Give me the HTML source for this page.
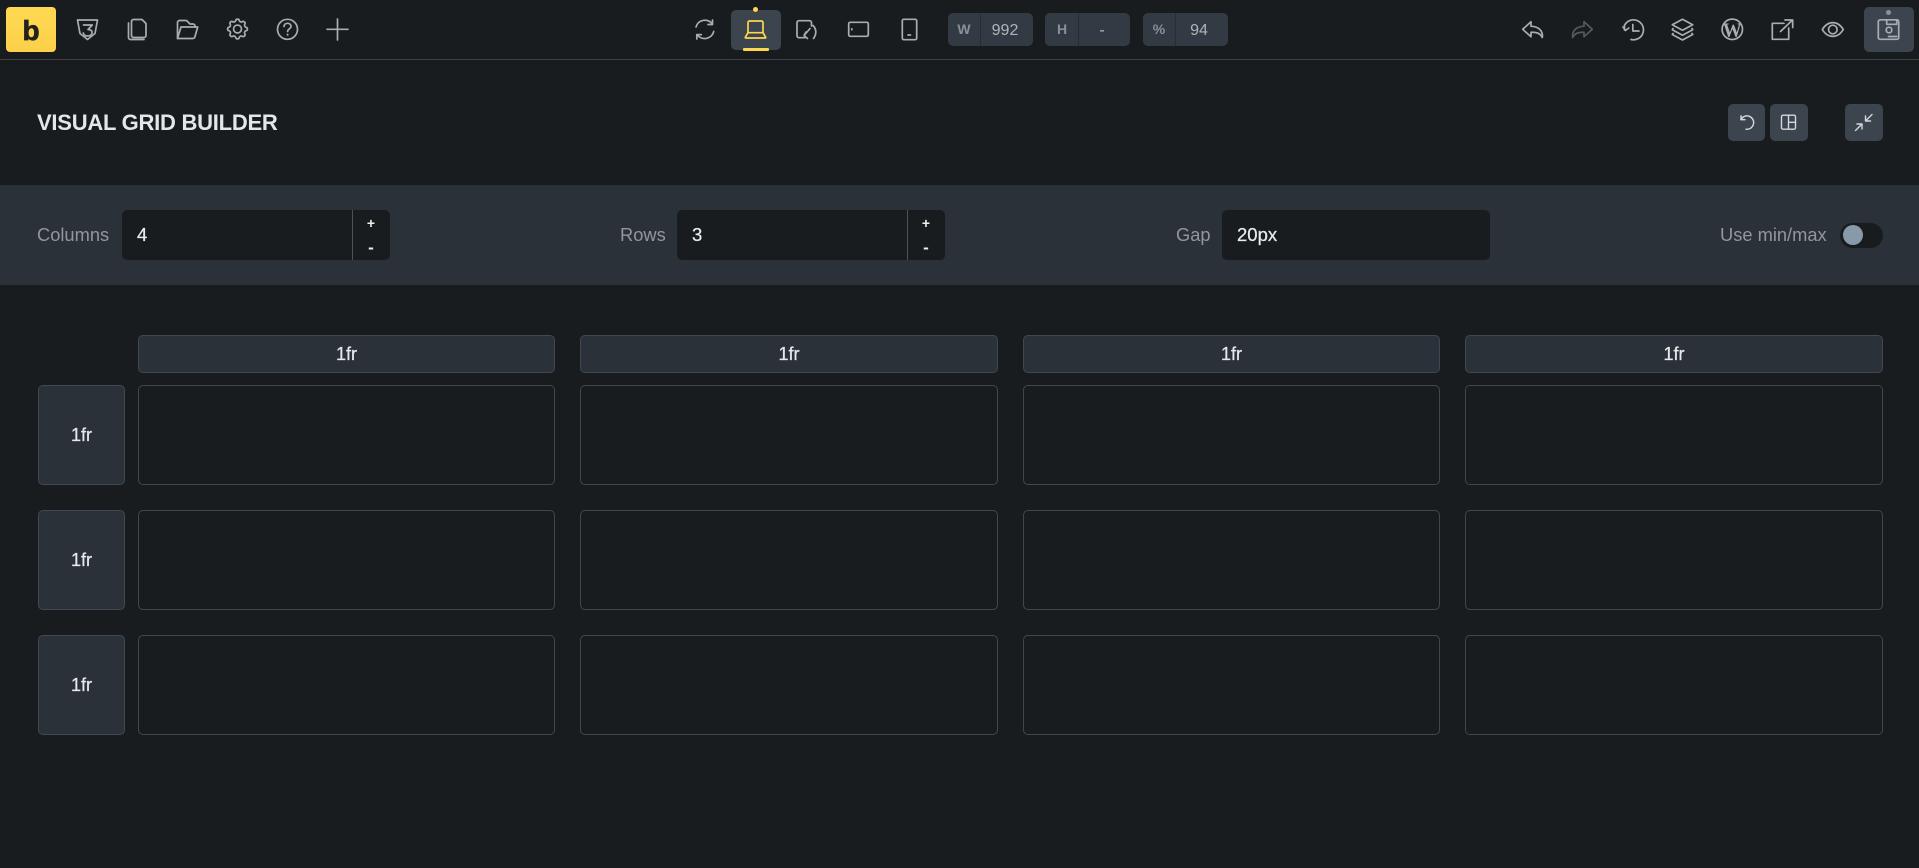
<!DOCTYPE html>
<html lang="en"><head><meta charset="utf-8"><title>Visual Grid Builder</title>
<style>
html,body{margin:0;padding:0;width:1919px;height:868px;overflow:hidden;background:#181c1f;font-family:"Liberation Sans",sans-serif}
.a{position:absolute;box-sizing:border-box}
.t{position:absolute;white-space:nowrap;line-height:1}
.c{transform:translateX(-50%)}
.cell{position:absolute;box-sizing:border-box;border:1px solid #43474b;border-radius:5px}
.hd{position:absolute;box-sizing:border-box;background:#2b3139;border:1px solid #3f4853;border-radius:5px;color:#e6e8ea;font-size:18px;-webkit-text-stroke:.25px #e6e8ea;display:flex;align-items:center;justify-content:center}
.rh{padding-top:1px}
.inp{position:absolute;box-sizing:border-box;background:#181c1f;border-radius:5px;top:210px;height:50px;width:268px}
.lab{font-size:18.3px;color:#92979c;top:226px}
.val{font-size:18.5px;color:#e8eaec;top:226px;-webkit-text-stroke:.25px #e8eaec}
.st{position:absolute;top:13px;height:33px;width:85px;background:#323a43;border-radius:5px}
.sd{position:absolute;top:13px;height:33px;width:1px;background:#272d34}
.sk{font-size:14px;font-weight:bold;color:#8a9099;top:22px}
.sv{font-size:16px;color:#b0b5ba;top:23px}
.btn{position:absolute;top:104px;height:37px;background:#3c444e;border-radius:5px}
svg{position:absolute;left:0;top:0;overflow:visible}
</style></head><body>

<div class="a" style="left:0;top:59px;width:1919px;height:1px;background:#3b3f46"></div>

<div class="a" style="left:6px;top:7px;width:50px;height:45px;border-radius:4px;background:linear-gradient(#ffd951,#fcd04a)"></div>
<div class="t c" style="left:31px;top:17px;font-size:28px;font-weight:bold;color:#22221f;-webkit-text-stroke:.7px #22221f">b</div>

<div class="a" style="left:731px;top:10px;width:50px;height:40px;background:#3c444e;border-radius:5px"></div>
<div class="a" style="left:743px;top:48px;width:26px;height:3px;background:#ffd64f;border-radius:1px"></div>
<div class="a" style="left:753px;top:7px;width:5px;height:5px;background:#ffd64f;border-radius:50%"></div>

<div class="st" style="left:948px"></div><div class="sd" style="left:980px"></div>
<div class="st" style="left:1045px"></div><div class="sd" style="left:1078px"></div>
<div class="st" style="left:1143px"></div><div class="sd" style="left:1175px"></div>
<div class="t c sk" style="left:964px">W</div><div class="t c sv" style="left:1005px">992</div>
<div class="t c sk" style="left:1062px">H</div><div class="t c sv" style="left:1102px">-</div>
<div class="t c sk" style="left:1159px">%</div><div class="t c sv" style="left:1199px">94</div>

<div class="a" style="left:1864px;top:7px;width:50px;height:45px;background:#3c444e;border-radius:5px"></div>
<div class="a" style="left:1886px;top:10px;width:5px;height:5px;background:#8b929b;border-radius:50%"></div>

<div class="t" style="left:37px;top:112px;font-size:22px;font-weight:bold;letter-spacing:-.25px;color:#e3e6ea">VISUAL GRID BUILDER</div>
<div class="btn" style="left:1728px;width:37px"></div>
<div class="btn" style="left:1770px;width:38px"></div>
<div class="btn" style="left:1845px;width:38px"></div>

<div class="a" style="left:0;top:185px;width:1919px;height:100px;background:#2b3139"></div>

<div class="t lab" style="left:37px">Columns</div>
<div class="inp" style="left:122px"></div>
<div class="a" style="left:352px;top:210px;width:1px;height:50px;background:#4a525c"></div>
<div class="t val" style="left:137px">4</div>
<div class="t c" style="left:371px;top:216px;font-size:14px;font-weight:bold;color:#eef0f2">+</div>
<div class="t c" style="left:371px;top:239px;font-size:17px;font-weight:bold;color:#eef0f2">-</div>

<div class="t lab" style="left:620px">Rows</div>
<div class="inp" style="left:677px"></div>
<div class="a" style="left:907px;top:210px;width:1px;height:50px;background:#4a525c"></div>
<div class="t val" style="left:692px">3</div>
<div class="t c" style="left:926px;top:216px;font-size:14px;font-weight:bold;color:#eef0f2">+</div>
<div class="t c" style="left:926px;top:239px;font-size:17px;font-weight:bold;color:#eef0f2">-</div>

<div class="t lab" style="left:1176px">Gap</div>
<div class="inp" style="left:1222px"></div>
<div class="t val" style="left:1237px">20px</div>

<div class="t lab" style="left:1720px">Use min/max</div>
<div class="a" style="left:1840px;top:223px;width:43px;height:25px;border-radius:13px;background:#181c1f"></div>
<div class="a" style="left:1843px;top:225px;width:20px;height:20px;border-radius:50%;background:#8899aa"></div>

<div class="hd" style="left:138px;top:335px;width:417px;height:38px">1fr</div>
<div class="hd" style="left:580px;top:335px;width:418px;height:38px">1fr</div>
<div class="hd" style="left:1023px;top:335px;width:417px;height:38px">1fr</div>
<div class="hd" style="left:1465px;top:335px;width:418px;height:38px">1fr</div>

<div class="hd rh" style="left:38px;top:385px;width:87px;height:100px">1fr</div>
<div class="hd rh" style="left:38px;top:510px;width:87px;height:100px">1fr</div>
<div class="hd rh" style="left:38px;top:635px;width:87px;height:100px">1fr</div>

<div class="cell" style="left:138px;top:385px;width:417px;height:100px"></div>
<div class="cell" style="left:580px;top:385px;width:418px;height:100px"></div>
<div class="cell" style="left:1023px;top:385px;width:417px;height:100px"></div>
<div class="cell" style="left:1465px;top:385px;width:418px;height:100px"></div>
<div class="cell" style="left:138px;top:510px;width:417px;height:100px"></div>
<div class="cell" style="left:580px;top:510px;width:418px;height:100px"></div>
<div class="cell" style="left:1023px;top:510px;width:417px;height:100px"></div>
<div class="cell" style="left:1465px;top:510px;width:418px;height:100px"></div>
<div class="cell" style="left:138px;top:635px;width:417px;height:100px"></div>
<div class="cell" style="left:580px;top:635px;width:418px;height:100px"></div>
<div class="cell" style="left:1023px;top:635px;width:417px;height:100px"></div>
<div class="cell" style="left:1465px;top:635px;width:418px;height:100px"></div>

<svg width="1919" height="868" viewBox="0 0 1919 868" fill="none" stroke="#a9adb1" stroke-width="1.7" stroke-linecap="round" stroke-linejoin="round">
<!-- css3 -->
<path d="M77.5 20H97.5L95 33.5L87.5 39.5L80 33.5Z"/>
<path d="M83.5 25H92.3L88 29.5C91 29.5 92.3 31 92 33C91.7 35 89.5 36 87.5 36C85.5 36 83.7 35 83.3 33"/>
<!-- copy -->
<path d="M133.5 19.5H142L146 23.5V35.5A2 2 0 0 1 144 37.5H133.5A2 2 0 0 1 131.5 35.5V21.5A2 2 0 0 1 133.5 19.5Z"/>
<path d="M128.5 23V37.5A2 2 0 0 0 130.5 39.5H144"/>
<!-- folder -->
<path d="M177.5 38.5V22.5A2 2 0 0 1 179.5 20.5H186.5L190 24H193A2 2 0 0 1 195 26V27"/>
<path d="M177.5 38.5L181 27H197.7L195 36.5A2.5 2.5 0 0 1 192.5 38.5Z"/>
<!-- gear -->
<g transform="translate(224.3 15.8) scale(1.1)" stroke-width="1.55">
<path d="M10.325 4.317c.426 -1.756 2.924 -1.756 3.35 0a1.724 1.724 0 0 0 2.573 1.066c1.543 -.94 3.31 .826 2.37 2.37a1.724 1.724 0 0 0 1.065 2.572c1.756 .426 1.756 2.924 0 3.35a1.724 1.724 0 0 0 -1.066 2.573c.94 1.543 -.826 3.31 -2.37 2.37a1.724 1.724 0 0 0 -2.572 1.065c-.426 1.756 -2.924 1.756 -3.35 0a1.724 1.724 0 0 0 -2.573 -1.066c-1.543 .94 -3.31 -.826 -2.37 -2.37a1.724 1.724 0 0 0 -1.065 -2.572c-1.756 -.426 -1.756 -2.924 0 -3.35a1.724 1.724 0 0 0 1.066 -2.573c-.94 -1.543 .826 -3.31 2.37 -2.37c1 .608 2.296 .07 2.572 -1.065z"/>
<circle cx="12" cy="12" r="3.6"/>
</g>
<!-- help -->
<circle cx="287.5" cy="29.3" r="10"/>
<path d="M284 26.5C284.1 24.4 285.6 23.3 287.5 23.3C289.5 23.3 291 24.6 291 26.5C291 28.8 287.6 29 287.6 31.5"/>
<path d="M287.6 34.6V34.8" stroke-width="2"/>
<!-- plus -->
<path d="M327 29.3H348M337.5 19V40"/>

<!-- refresh -->
<path d="M696 27A9.3 9.3 0 0 1 712 23.5M713.7 31.5A9.3 9.3 0 0 1 697.5 35.2"/>
<path d="M712.5 20V24.5H708M696.8 39V34.6H701.3"/>
<!-- laptop -->
<g stroke="#ffd64f">
<path d="M748 32.7V22.5A1.5 1.5 0 0 1 749.5 21H761.5A1.5 1.5 0 0 1 763 22.5V32.7"/>
<path d="M748 32.7H763L765.7 37.3A.5 .5 0 0 1 765.2 38H745.8A.5 .5 0 0 1 745.3 37.3Z"/>
</g>
<!-- rotate tablet -->
<path d="M811.5 26V22.5A2 2 0 0 0 809.5 20.7H799A2 2 0 0 0 797 22.7V35.7A2 2 0 0 0 799 37.7H805"/>
<path d="M813 25.5C816.5 29 816.8 34 813.5 38.5M806 32L804 35.5L807.5 38.5M804.5 35L810 28.5"/>
<!-- tablet landscape -->
<rect x="848.7" y="22.3" width="19.6" height="14" rx="1.5"/>
<path d="M851.8 28.8V29.8"/>
<!-- tablet portrait -->
<rect x="902.3" y="19.3" width="14.4" height="20.4" rx="1.5"/>
<path d="M908 35H910.5"/>

<!-- undo -->
<path d="M1531 21.7L1522.7 29.3L1531 36.7V32.3C1536.5 32 1540.5 33.5 1542.3 37.5C1543.3 31 1538.5 26.3 1531 26.3Z"/>
<!-- redo -->
<path stroke="#55595d" d="M1584 21.7L1592.3 29.3L1584 36.7V32.3C1578.5 32 1574.5 33.5 1572.7 37.5C1571.7 31 1576.5 26.3 1584 26.3Z"/>
<!-- history -->
<path d="M1625 24.5A10 10 0 1 1 1631 39.5"/>
<path d="M1623 27L1625.5 30.5L1628.8 28M1624.5 25V30"/>
<path d="M1632.8 24.5V31H1639"/>
<!-- layers -->
<path d="M1682.5 19.3L1692.7 24.8L1682.5 30.3L1672.3 24.8Z"/>
<path d="M1673 28.5L1672.3 29.8L1682.5 35.3L1692.7 29.8L1692 28.5"/>
<path d="M1673 33.5L1672.3 34.5L1682.5 40L1692.7 34.5L1692 33.5"/>
<!-- wordpress -->
<circle cx="1732.3" cy="29.3" r="10.2"/>
<text x="1732.3" y="36.3" text-anchor="middle" font-family="'Liberation Serif',serif" font-weight="bold" font-size="20" fill="#a9adb1" stroke="none" textLength="19" lengthAdjust="spacingAndGlyphs">W</text>
<!-- external -->
<path d="M1784 23.3H1772.3V39.3H1788.7V28"/>
<path d="M1780.5 31.5L1792.5 20M1785 20H1792.7V27.5"/>
<!-- eye -->
<path d="M1822.3 29.5C1825 25 1828.5 22.6 1832.8 22.6C1837 22.6 1840.6 25 1843.3 29.5C1840.6 34 1837 36.4 1832.8 36.4C1828.5 36.4 1825 34 1822.3 29.5Z"/>
<circle cx="1832.8" cy="29.5" r="4.3"/>
<!-- save -->
<path d="M1880.3 19.8H1897A1.7 1.7 0 0 1 1898.7 21.5V37.6A1.7 1.7 0 0 1 1897 39.3H1880A1.7 1.7 0 0 1 1878.3 37.6V21.8A2 2 0 0 1 1880.3 19.8Z"/>
<path d="M1886.7 20V24.3H1896.7V20"/>
<circle cx="1889" cy="30" r="2.8"/>
<path d="M1888.5 36.5H1896.7"/>

<!-- header buttons -->
<g stroke="#d5d8db" stroke-width="1.4">
<path d="M1741 119.5A6.7 6.7 0 1 1 1746 129.2"/>
<path d="M1741 115.8V119.7H1745"/>
<rect x="1781.5" y="115.2" width="14" height="14" rx="1.5"/>
<path d="M1788.5 115.2V129.2M1788.5 122.3H1795.5"/>
<path d="M1855.5 130.5L1861.5 124.5M1857 124H1862V129M1872 114.5L1865.5 121M1865.5 116V121H1870.5"/>
</g>
</svg>
</body></html>
